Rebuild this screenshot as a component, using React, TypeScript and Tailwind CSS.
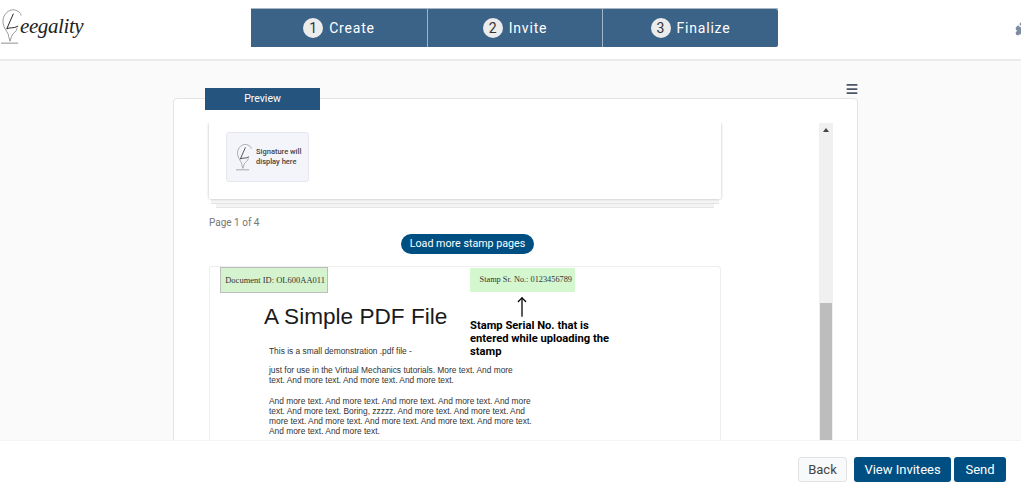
import { Menu, MoveUp, Puzzle } from "lucide-react";

const steps = [
  { n: 1, label: "Create", width: "w-[176px]", extra: "" },
  { n: 2, label: "Invite", width: "w-[175px]", extra: "" },
  { n: 3, label: "Finalize", width: "w-[176px]", extra: "rounded-br-[2px] rounded-tr-[2px]" },
];

function BulbMark({ className }: { className?: string }) {
  return (
    <svg viewBox="0 0 22 40" fill="none" className={className}>
      <path
        d="M8 30 C8 25 2 22 2 14 C2 6 9 1 14 2 C18 3 21 5 21 8"
        stroke="#8a8a8a"
        strokeWidth="0.9"
      />
      <path
        d="M11 30 C12 26 17 25 17 21"
        stroke="#8a8a8a"
        strokeWidth="0.9"
      />
      <path d="M8 30 L9.5 35 M11 30 L9.5 35" stroke="#8a8a8a" strokeWidth="0.9" />
      <path d="M0 37 H18" stroke="#8a8a8a" strokeWidth="1" />
      <path
        d="M13 6 C11 11 8 17 6 22 C9 20 13 22 18 19"
        stroke="#1c1c1c"
        strokeWidth="1"
      />
    </svg>
  );
}

function Logo() {
  return (
    <div className="flex w-[251px] shrink-0 items-center pl-[1px]">
      <BulbMark className="h-[38px] w-[21px] shrink-0" />
      <span className="-ml-[2px] mt-[-2px] font-['Liberation_Serif',serif] text-[21px] italic leading-none tracking-[-0.4px] text-[#222]">
        eegality
      </span>
    </div>
  );
}

function Header() {
  return (
    <header className="relative flex h-[61px] shrink-0 items-start border-b-2 border-[#ebebeb] bg-white pt-[8px]">
      <Logo />
      <nav className="flex h-[39px] border-t border-[#a9b6c3]">
        {steps.map((step, i) => (
          <div
            key={step.n}
            className={`flex ${step.width} ${step.extra} items-center justify-center gap-[6px] bg-[#3b6388] ${
              i > 0 ? "border-l border-[#9fb4c7]" : ""
            }`}
          >
            <span className="flex h-[20px] w-[20px] items-center justify-center rounded-full bg-[#ececec] text-[14px] text-[#333]">
              {step.n}
            </span>
            <span className="text-[14px] tracking-[0.8px] text-white">{step.label}</span>
          </div>
        ))}
      </nav>
      <Puzzle className="absolute left-[1015px] top-[21px] h-[15px] w-[15px] fill-[#7f8da0] text-[#7f8da0]" />
    </header>
  );
}

function SignaturePage() {
  return (
    <div className="shrink-0">
      <div className="relative z-20 h-[76px] rounded-b-[2px] bg-white pl-[17px] pt-[9px] shadow-[0_0_3px_rgba(0,0,0,0.28)]">
        <div className="flex h-[50px] w-[83px] items-center gap-[4px] rounded-[3px] border border-[#e6e6ee] bg-[#f4f4fb] pl-[9px]">
          <BulbMark className="h-[29px] w-[16px] shrink-0" />
          <p className="whitespace-nowrap text-[7.5px] font-medium leading-[10px] text-[#444]">
            Signature will
            <br />
            display here
          </p>
        </div>
      </div>
      <div className="relative z-10 mx-[2px] h-[5px] border-b border-[#e2e2e2] bg-[#f5f5f5]" />
      <div className="mx-[7px] h-[4px] border-b border-[#e6e6e6] bg-[#f3f3f3]" />
    </div>
  );
}

function PdfPage() {
  return (
    <div className="relative mt-[12px] h-[200px] shrink-0 rounded-t-[3px] border border-b-0 border-[#eeeeee] bg-white">
      <div className="flex items-start pl-[10px]">
        <div className="flex h-[26px] w-[108px] items-center justify-end whitespace-nowrap border border-[#bdbdbd] bg-[#d5f3cf] pr-[2px] font-['Liberation_Serif',serif] text-[8.5px] text-[#333]">
          Document ID: OL600AA011
        </div>
        <div className="ml-[142px] mt-[1px] flex h-[24px] w-[105px] items-center justify-end whitespace-nowrap bg-[#d5f7cf] pr-[3px] font-['Liberation_Serif',serif] text-[8.3px] text-[#333]">
          Stamp Sr. No.: 0123456789
        </div>
      </div>
      <div className="pl-[54px] font-['Liberation_Sans',sans-serif]">
        <h2 className="mt-[9px] text-[22.6px] leading-[30px] text-[#1a1a1a]">A Simple PDF File</h2>
      </div>
      <div className="mt-[14px] pl-[59px] font-['Liberation_Sans',sans-serif] text-[8.4px] leading-[10px] text-[#333]">
        <p>This is a small demonstration .pdf file -</p>
        <p className="mt-[9px]">
          just for use in the Virtual Mechanics tutorials. More text. And more
          <br />
          text. And more text. And more text. And more text.
        </p>
        <p className="mt-[11px]">
          And more text. And more text. And more text. And more text. And more
          <br />
          text. And more text. Boring, zzzzz. And more text. And more text. And
          <br />
          more text. And more text. And more text. And more text. And more text.
          <br />
          And more text. And more text.
        </p>
      </div>
      <div className="absolute left-[260px] top-[26px] w-[150px]">
        <MoveUp className="ml-[41px] mt-[2px] h-[24px] w-[22px] text-black" strokeWidth={1.4} />
        <p className="text-[11.2px] font-bold leading-[13px] text-black">
          Stamp Serial No. that is entered while uploading the stamp
        </p>
      </div>
    </div>
  );
}

function PreviewCard() {
  return (
    <section className="relative ml-[173px] mt-[37px] h-[400px] w-[685px] rounded-t-[4px] border border-[#e4e4e4] bg-white pt-[24px]">
      <div className="absolute left-[31px] top-[-11px] flex h-[22px] w-[115px] items-center justify-center bg-[#25557f] text-[10.5px] text-white">
        Preview
      </div>
      <Menu className="absolute left-[671px] top-[-17px] h-[14px] w-[14px] text-[#4b5563]" strokeWidth={3} />
      <div className="flex h-full">
        <div className="ml-[32px] flex h-full w-[518px] flex-col overflow-hidden px-[3px]">
          <SignaturePage />
          <p className="mt-[8px] text-[10px] leading-[14px] text-[#777]">Page 1 of 4</p>
          <button
            type="button"
            className="ml-[192px] mt-[4px] flex h-[20px] w-[133px] shrink-0 items-center justify-center rounded-full bg-[#004f83] text-[10.7px] text-white"
          >
            Load more stamp pages
          </button>
          <PdfPage />
        </div>
        <div className="ml-[95px] flex h-full w-[14px] flex-col bg-[#f0f0f0]">
          <div className="flex h-[180px] justify-center pt-[5px]">
            <div className="h-0 w-0 border-x-[3.5px] border-b-[4px] border-x-transparent border-b-[#444]" />
          </div>
          <div className="mx-[1px] flex-1 bg-[#bdbdbd]" />
        </div>
      </div>
    </section>
  );
}

function Footer() {
  return (
    <footer className="flex h-[44px] shrink-0 items-start justify-end border-t border-[#f3f3f8] bg-white pr-[15px] pt-[16px] text-[13px]">
      <button
        type="button"
        className="h-[25px] w-[49px] rounded-[3px] border border-[#e2e2e2] bg-[#f8f9fa] text-[#444]"
      >
        Back
      </button>
      <button
        type="button"
        className="ml-[7px] h-[25px] w-[97px] rounded-[3px] bg-[#004f83] text-white"
      >
        View Invitees
      </button>
      <button
        type="button"
        className="ml-[3px] h-[25px] w-[52px] rounded-[3px] bg-[#004f83] text-white"
      >
        Send
      </button>
    </footer>
  );
}

export default function App() {
  return (
    <div className="flex h-[484px] w-[1021px] flex-col overflow-hidden bg-white font-['Roboto',sans-serif]">
      <Header />
      <main className="min-h-0 flex-1 overflow-hidden bg-[#fafafa]">
        <PreviewCard />
      </main>
      <Footer />
    </div>
  );
}
